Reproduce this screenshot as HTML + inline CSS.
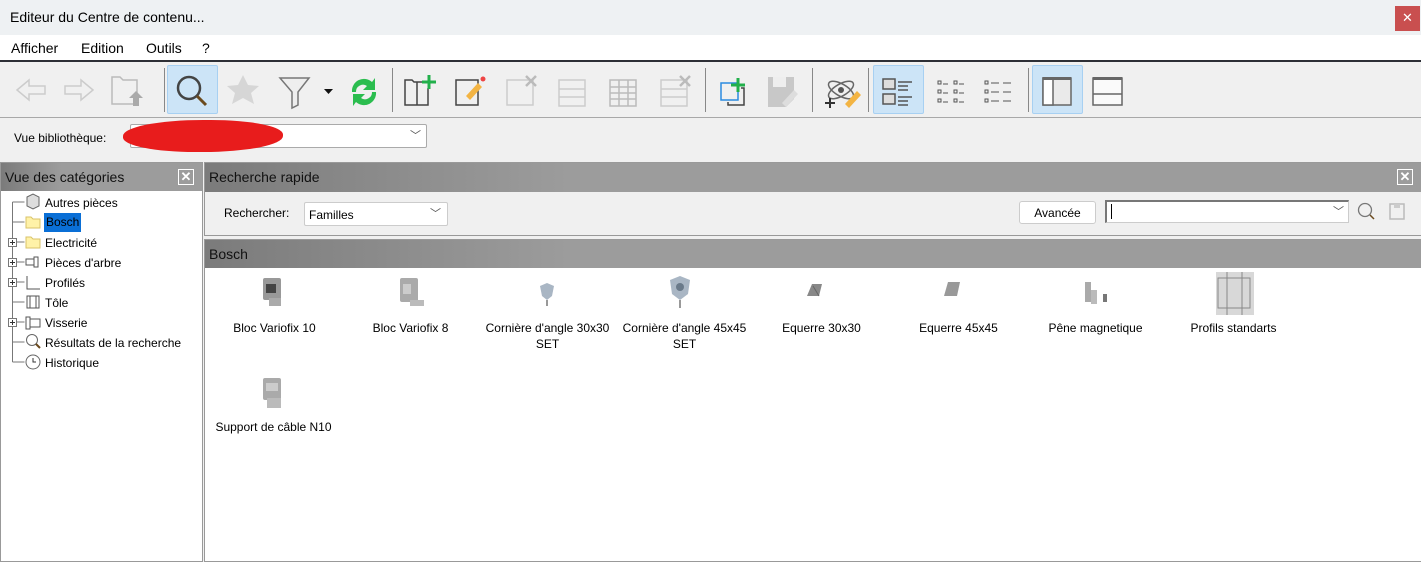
<!DOCTYPE html>
<html><head><meta charset="utf-8"><style>
*{box-sizing:border-box;margin:0;padding:0}
body{width:1421px;height:562px;overflow:hidden;background:#f0f0f0;font-family:"Liberation Sans",sans-serif;font-size:12px;color:#000;position:relative}
.a{position:absolute}
.hdr{background:linear-gradient(90deg,#7b7b7b,#9c9c9c 30%,#9c9c9c);color:#111;font-size:14px;padding:6px 4px}
.xb{position:absolute;width:16px;height:16px;border:1px solid #fff;color:#fff;font-size:13px;line-height:13px;text-align:center;font-weight:bold}
.lbl{position:absolute;width:137px;text-align:center;font-size:12px;line-height:16px}
.tr{position:absolute;left:45px;font-size:12px}
.sep{position:absolute;top:68px;width:1px;height:44px;background:#888}
</style></head><body>
<div class="a" style="left:0;top:0;width:1421px;height:35px;background:#eef1f3"></div>
<div class="a" style="left:10px;top:9px;font-size:14px">Editeur du Centre de contenu...</div>
<div class="a" style="left:1395px;top:6px;width:25px;height:25px;background:#c94f4f;color:#fff;text-align:center;font-size:13px;line-height:24px">✕</div>
<div class="a" style="left:0;top:35px;width:1421px;height:25px;background:#fff"></div>
<div class="a" style="left:11px;top:40px;font-size:14px">Afficher</div>
<div class="a" style="left:81px;top:40px;font-size:14px">Edition</div>
<div class="a" style="left:146px;top:40px;font-size:14px">Outils</div>
<div class="a" style="left:202px;top:40px;font-size:14px">?</div>
<div class="a" style="left:0;top:60px;width:1421px;height:2px;background:#2d2f36"></div>
<div class="a" style="left:0;top:117px;width:1421px;height:1px;background:#a8a8a8"></div>
<div class="a" style="left:167px;top:65px;width:51px;height:49px;background:#cce4f7;border:1px solid #a7d0f2;border-radius:2px"></div>
<div class="a" style="left:873px;top:65px;width:51px;height:49px;background:#cce4f7;border:1px solid #a7d0f2;border-radius:2px"></div>
<div class="a" style="left:1032px;top:65px;width:51px;height:49px;background:#cce4f7;border:1px solid #a7d0f2;border-radius:2px"></div>
<div class="sep" style="left:164px"></div><div class="sep" style="left:392px"></div><div class="sep" style="left:705px"></div><div class="sep" style="left:812px"></div><div class="sep" style="left:868px"></div><div class="sep" style="left:1028px"></div>
<svg class="a" style="left:0;top:62px" width="1140" height="56" fill="none" stroke-width="1.5">
<path d="M17 28 l12-10 v6 h16 v8 h-16 v6z" stroke="#ccc"/>
<path d="M93 28 l-12-10 v6 h-16 v8 h16 v6z" stroke="#ccc"/>
<path d="M112 15 h8 l3 3 h14 v24 h-25z" stroke="#bbb"/><path d="M133 44 v-8 h-4 l7-7 7 7 h-4 v8z" fill="#aaa"/>
<circle cx="189" cy="26" r="11" stroke="#444" stroke-width="2.5"/><path d="M197 34 l9 9" stroke="#6b4a1e" stroke-width="3"/>
<path d="M243 13 l5 10 11 1 -8 7 3 11 -11-6 -11 6 3-11 -8-7 11-1z" fill="#d6d6d6"/>
<path d="M280 16 h29 l-11 14 v13 l-6 3 v-16z" stroke="#777" fill="#eee"/>
<path d="M324 27 h9 l-4.5 5z" fill="#111"/>
<path d="M352 30 a12 12 0 0 1 20-10 l3-4 v12 h-12 l4-4 a7 7 0 0 0-11 6z" fill="#2bbd4f"/><path d="M376 30 a12 12 0 0 1-20 10 l-3 4 v-12 h12 l-4 4 a7 7 0 0 0 11-6z" fill="#2bbd4f"/>
<path d="M405 18 h7 l2 2 h3 v23 h-12z M417 20 h6 M428 26 v17 h-14" stroke="#444"/><path d="M429 13 v14 M422 20 h14" stroke="#22b04b" stroke-width="3"/>
<path d="M456 18 h22 v25 h-22z" stroke="#444"/><path d="M466 34 l12-13 4 4-12 13z" fill="#f3b443"/><circle cx="483" cy="17" r="2.5" fill="#e44"/>
<path d="M507 18 h26 v25 h-26z" stroke="#ccc"/><path d="M526 14 l10 10 M536 14 l-10 10" stroke="#bbb" stroke-width="2.5"/>
<path d="M559 18 h26 v26 h-26z M559 27 h26 M559 35 h26" stroke="#ccc"/>
<path d="M610 18 h26 v26 h-26z M610 25 h26 M610 31 h26 M610 37 h26 M619 18 v26 M628 18 v26" stroke="#bbb"/>
<path d="M661 18 h26 v26 h-26z M661 27 h26 M661 35 h26" stroke="#ccc"/><path d="M680 14 l10 10 M690 14 l-10 10" stroke="#bbb" stroke-width="2.5"/>
<path d="M721 21 h17 v17 h-17z" stroke="#2a8be0"/><path d="M741 26 h3 v17 h-16 v-3" stroke="#444"/><path d="M738 16 v14 M731 23 h14" stroke="#22b04b" stroke-width="3"/>
<path d="M768 15 h26 v22 l-8 8 h-18z" fill="#c8c8c8"/><rect x="773" y="15" width="13" height="10" fill="#eee"/><path d="M782 41 l12-13 4 4-12 13z" fill="#ddd"/>
<ellipse cx="841" cy="28" rx="14" ry="6" stroke="#666" transform="rotate(30 841 28)"/><ellipse cx="841" cy="28" rx="14" ry="6" stroke="#666" transform="rotate(-30 841 28)"/><circle cx="841" cy="28" r="3" fill="#555"/><path d="M845 42 l12-13 4 4-12 13z" fill="#f3b443"/><path d="M825 41 h10 M830 36 v10" stroke="#333" stroke-width="2"/>
<path d="M883 17 h12 v10 h-12z M883 32 h12 v10 h-12z" stroke="#555" fill="#ddd"/><path d="M898 20 h14 M898 24 h10 M898 28 h10 M898 35 h14 M898 39 h10 M898 43 h10" stroke="#555"/>
<path d="M938 19h3v3h-3z M954 19h3v3h-3z M938 28h3v3h-3z M954 28h3v3h-3z M938 37h3v3h-3z M954 37h3v3h-3z M943 22h5 M959 22h5 M943 31h5 M959 31h5 M943 40h5 M959 40h5" stroke="#555" stroke-width="1"/>
<path d="M985 19h3v3h-3z M985 28h3v3h-3z M985 37h3v3h-3z M991 21h8 M1003 21h8 M991 30h8 M1003 30h8 M991 39h8 M1003 39h8" stroke="#555" stroke-width="1"/>
<rect x="1043" y="16" width="28" height="27" stroke="#666" fill="#eaeaea"/><rect x="1043" y="16" width="10" height="27" fill="#fff" stroke="#666"/><rect x="1043" y="15" width="28" height="3" fill="#666"/>
<rect x="1093" y="16" width="29" height="27" stroke="#666" fill="#fafafa"/><path d="M1093 32 h29" stroke="#666"/><rect x="1093" y="15" width="29" height="3" fill="#666"/>
</svg>
<div class="a" style="left:14px;top:131px;font-size:12px">Vue bibliothèque:</div>
<div class="a" style="left:130px;top:124px;width:297px;height:24px;background:#fff;border:1px solid #aaa;border-radius:2px"></div>
<div class="a" style="left:410px;top:127px;font-size:11px;color:#555">﹀</div>
<div class="a" style="left:123px;top:120px;width:160px;height:32px;background:#e81c1c;border-radius:50% 45% 50% 45%"></div>
<div class="a" style="left:0;top:162px;width:203px;height:400px;background:#fff;border:1px solid #999"></div>
<div class="a hdr" style="left:1px;top:163px;width:201px;height:28px">Vue des catégories</div>
<div class="xb" style="left:178px;top:169px">✕</div>
<svg class="a" style="left:0;top:192px" width="44" height="180" stroke="#777" fill="none">
<path d="M12.5 10 v160 M12.5 10 h12 M12.5 30 h12 M12.5 50 h12 M12.5 70 h12 M12.5 90 h12 M12.5 110 h12 M12.5 130 h12 M12.5 150 h12 M12.5 170 h12"/>
<g fill="#fff"><rect x="8.5" y="46.5" width="8" height="8"/><rect x="8.5" y="66.5" width="8" height="8"/><rect x="8.5" y="86.5" width="8" height="8"/><rect x="8.5" y="126.5" width="8" height="8"/></g>
<path d="M10 50.5h5M12.5 48v5M10 70.5h5M12.5 68v5M10 90.5h5M12.5 88v5M10 130.5h5M12.5 128v5" stroke="#333"/>
<path d="M27 5 l6-3 6 3 v9 l-6 3 -6-3z" fill="#ddd" stroke="#666"/>
<path d="M26 25 h5 l2 2 h7 v9 h-14z" fill="#fff2a8" stroke="#d8c36a"/><path d="M26 45 h5 l2 2 h7 v9 h-14z" fill="#fff2a8" stroke="#d8c36a"/>
<path d="M26 67 h8 v6 h-8z M34 65 h4 v10 h-4z" stroke="#555"/>
<path d="M27 84 v13 h13" stroke="#555"/>
<path d="M27 104 h12 v12 h-12z M30 104 v12 M36 104 v12" stroke="#555"/>
<path d="M26 125 h4 v12 h-4z M30 127 h10 v8 h-10z" stroke="#555"/>
<circle cx="32" cy="148" r="5.5" stroke="#666"/><path d="M36 152 l4 4" stroke="#6b4a1e" stroke-width="2"/>
<circle cx="33" cy="170" r="7" stroke="#666"/><path d="M33 166 v4 h3" stroke="#333"/>
</svg>
<div class="tr" style="top:196px">Autres pièces</div>
<div class="tr" style="top:213px;left:44px;background:#0a6fd6;color:#000;padding:2px 2px;height:19px">Bosch</div>
<div class="tr" style="top:236px">Electricité</div>
<div class="tr" style="top:256px">Pièces d'arbre</div>
<div class="tr" style="top:276px">Profilés</div>
<div class="tr" style="top:296px">Tôle</div>
<div class="tr" style="top:316px">Visserie</div>
<div class="tr" style="top:336px">Résultats de la recherche</div>
<div class="tr" style="top:356px">Historique</div>
<div class="a" style="left:204px;top:162px;width:1217px;height:74px;border:1px solid #999;border-right:none"></div>
<div class="a hdr" style="left:205px;top:163px;width:1216px;height:29px">Recherche rapide</div>
<div class="xb" style="left:1397px;top:169px">✕</div>
<div class="a" style="left:224px;top:206px">Rechercher:</div>
<div class="a" style="left:304px;top:202px;width:144px;height:24px;background:#fff;border:1px solid #ccc;border-radius:2px;padding:5px 4px;font-size:12px">Familles</div>
<div class="a" style="left:430px;top:205px;font-size:11px;color:#555">﹀</div>
<div class="a" style="left:1019px;top:201px;width:77px;height:23px;background:#fff;border:1px solid #ccc;border-radius:3px;text-align:center;padding-top:4px">Avancée</div>
<div class="a" style="left:1105px;top:200px;width:244px;height:23px;background:#fff;border:1px solid #ccc;border-top:2px solid #777;border-left:2px solid #777"></div>
<div class="a" style="left:1111px;top:204px;width:1px;height:15px;background:#000"></div>
<div class="a" style="left:1333px;top:203px;font-size:11px;color:#555">﹀</div>
<svg class="a" style="left:1355px;top:200px" width="56" height="24" fill="none"><circle cx="10" cy="10" r="6.5" stroke="#777" stroke-width="1.3"/><path d="M15 15 l4 4" stroke="#6b4a1e" stroke-width="1.5"/><rect x="35" y="4" width="14" height="15" stroke="#bbb" stroke-width="1.5"/><rect x="39" y="4" width="6" height="4" fill="#ccc"/></svg>
<div class="a" style="left:204px;top:239px;width:1217px;height:323px;background:#fff;border:1px solid #999;border-right:none"></div>
<div class="a hdr" style="left:205px;top:240px;width:1216px;height:28px">Bosch</div>
<svg class="a" style="left:205px;top:270px" width="1100" height="150">
<rect x="58" y="8" width="18" height="22" rx="2" fill="#999"/><rect x="61" y="14" width="10" height="9" fill="#444"/><rect x="64" y="28" width="12" height="8" fill="#aaa"/>
<rect x="195" y="8" width="18" height="24" rx="2" fill="#aaa"/><rect x="198" y="14" width="8" height="10" fill="#ccc"/><rect x="205" y="30" width="14" height="6" fill="#bbb"/>
<path d="M335 16 l7-3 7 3 -2 10 -5 4 -5-4z" fill="#a9b6c4"/><path d="M342 30 v6" stroke="#999" stroke-width="2"/>
<path d="M465 10 l10-4 10 4 -2 14 -8 6 -8-6z" fill="#a9b6c4"/><circle cx="475" cy="17" r="4" fill="#6a7a8a"/><path d="M475 30 v8" stroke="#999" stroke-width="2"/>
<path d="M607 14 h10 l-3 12 h-12z" fill="#888"/><path d="M608 16 l6 10" stroke="#666"/>
<path d="M743 12 h12 l-3 14 h-13z" fill="#999"/>
<rect x="880" y="12" width="6" height="20" fill="#aaa"/><rect x="886" y="20" width="6" height="14" fill="#bbb"/><rect x="898" y="24" width="4" height="8" fill="#777"/>
<rect x="1011" y="2" width="38" height="43" fill="#d8d8d8"/><path d="M1013 8 h32 v30 h-32z M1022 2 v43 M1037 2 v43" stroke="#888" fill="none"/>
<rect x="58" y="108" width="18" height="22" rx="2" fill="#aaa"/><rect x="61" y="113" width="12" height="8" fill="#ccc"/><rect x="62" y="128" width="14" height="10" fill="#bbb"/>
</svg>
<div class="lbl" style="left:206px;top:320px">Bloc Variofix 10</div>
<div class="lbl" style="left:342px;top:320px">Bloc Variofix 8</div>
<div class="lbl" style="left:479px;top:320px">Cornière d'angle 30x30<br>SET</div>
<div class="lbl" style="left:616px;top:320px">Cornière d'angle 45x45<br>SET</div>
<div class="lbl" style="left:753px;top:320px">Equerre 30x30</div>
<div class="lbl" style="left:890px;top:320px">Equerre 45x45</div>
<div class="lbl" style="left:1027px;top:320px">Pêne magnetique</div>
<div class="lbl" style="left:1165px;top:320px">Profils standarts</div>
<div class="lbl" style="left:205px;top:419px">Support de câble N10</div>
</body></html>
